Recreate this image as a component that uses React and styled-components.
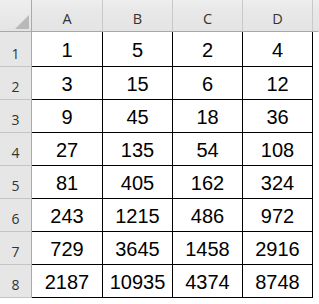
import React from "react";
import styled, { createGlobalStyle } from "styled-components";

const Global = createGlobalStyle`
  html, body { margin: 0; padding: 0; background: #ffffff; }
  body { width: 319px; height: 304px; overflow: hidden; }
`;

const Sheet = styled.div`
  display: grid;
  grid-template-columns: 32px 71px 70px 70px 70px 6px;
  grid-template-rows: 32px 35px repeat(7, 33px);
  width: 319px;
`;

const Corner = styled.div`
  position: relative;
  background: linear-gradient(#eeeeee, #e4e4e4);
  border-right: 1px solid #a9a9a9;
  border-bottom: 1px solid #a9a9a9;
  box-sizing: border-box;
`;

const Triangle = styled.div`
  position: absolute;
  right: 2px;
  bottom: 2px;
  width: 0;
  height: 0;
  border-left: 14px solid transparent;
  border-bottom: 14px solid #b9b9b9;
`;

const ColHead = styled.div`
  display: flex;
  align-items: flex-end;
  justify-content: center;
  padding-bottom: 3px;
  box-sizing: border-box;
  background: linear-gradient(#eeeeee 0%, #e8e8e8 35%, #e4e4e4 100%);
  border-right: 1px solid ${(p) => (p.$last ? "transparent" : "#c8c8c8")};
  border-bottom: 1px solid #a9a9a9;
  font-family: "Open Sans", "Liberation Sans", sans-serif;
  font-size: 14.5px;
  color: #333333;
  line-height: 18px;
`;

const RowHead = styled.div`
  display: flex;
  align-items: flex-end;
  justify-content: center;
  padding-bottom: 4px;
  box-sizing: border-box;
  background: #e6e6e6;
  border-right: 1px solid #a9a9a9;
  border-bottom: 1px solid #c4c4c4;
  font-family: "Open Sans", "Liberation Sans", sans-serif;
  font-size: 14px;
  color: #333333;
  line-height: 17px;
`;

const Cell = styled.div`
  display: flex;
  align-items: center;
  justify-content: center;
  padding-top: 2px;
  box-sizing: border-box;
  border-right: 1px solid #000000;
  border-bottom: 1px solid #000000;
  font-family: "Liberation Sans", Arial, sans-serif;
  font-size: 20px;
  color: #000000;
  line-height: 22px;
`;

const Filler = styled.div`
  background: #ffffff;
`;

const cols = ["A", "B", "C", "D"];
const rows = [1, 2, 3, 4, 5, 6, 7, 8].map((r) => {
  const first = Math.pow(3, r - 1);
  return [first, first * 5, first * 2, first * 4];
});

export default function App() {
  return (
    <>
      <Global />
      <Sheet>
        <Corner>
          <Triangle />
        </Corner>
        {cols.map((c) => (
          <ColHead key={c}>{c}</ColHead>
        ))}
        <ColHead $last />
        {rows.map((vals, i) => (
          <React.Fragment key={i}>
            <RowHead>{i + 1}</RowHead>
            {vals.map((v, j) => (
              <Cell key={j}>{v}</Cell>
            ))}
            <Filler />
          </React.Fragment>
        ))}
      </Sheet>
    </>
  );
}
